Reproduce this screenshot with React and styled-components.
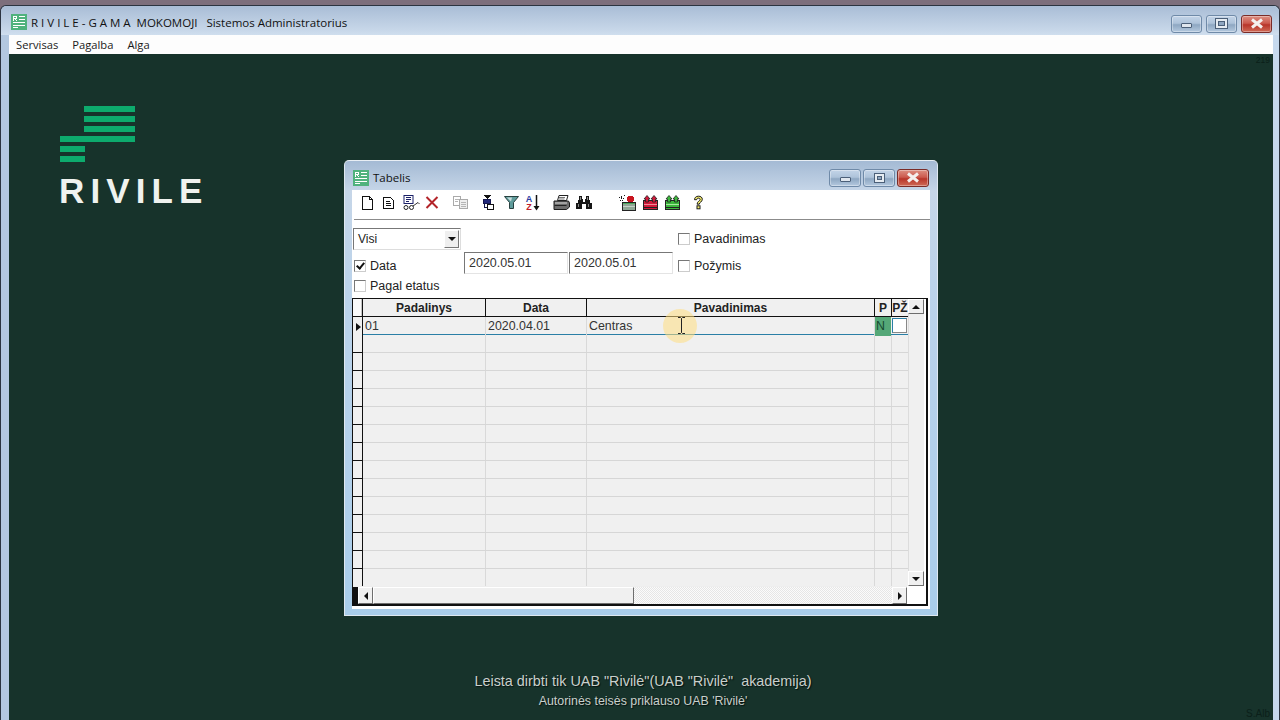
import React from 'react';
import styled, { createGlobalStyle } from 'styled-components';

const GlobalStyle = createGlobalStyle`
  html, body { margin: 0; padding: 0; background: #17332b; overflow: hidden; }
  #root { width: 1280px; height: 720px; }
`;

const rows = Array.from({ length: 14 });

// dx is the distance from the centre of the previous icon
const tools = [
  { Icon: NewDocIcon, dx: 13 },
  { Icon: DocIcon, dx: 21 },
  { Icon: ViewIcon, dx: 23 },
  { Icon: DeleteIcon, dx: 21 },
  { Icon: CopyIcon, dx: 28 },
  { Icon: TreeIcon, dx: 28 },
  { Icon: FunnelIcon, dx: 23 },
  { Icon: SortIcon, dx: 22 },
  { Icon: PrintIcon, dx: 28 },
  { Icon: BinocularsIcon, dx: 23 },
  { Icon: AddBoxIcon, dx: 43 },
  { Icon: RedBoxIcon, dx: 23 },
  { Icon: GreenBoxIcon, dx: 22 },
  { Icon: HelpIcon, dx: 26 },
];

export default function App() {
  return (
    <>
      <GlobalStyle />
      <Page>
        <MainWindow>
          <MainTitle>
            <AppIcon />
            <MainCaption>{'R I V I L E - G A M A  MOKOMOJI   Sistemos Administratorius'}</MainCaption>
            <CaptionButtons />
          </MainTitle>
          <MenuBar>
            <MenuItem>Servisas</MenuItem>
            <MenuItem>Pagalba</MenuItem>
            <MenuItem>Alga</MenuItem>
          </MenuBar>
          <Canvas>
            <Logo>
              <LogoBar $w={51} $left={24} />
              <LogoBar $w={51} $left={24} />
              <LogoBar $w={51} $left={24} />
              <LogoBar $w={75} />
              <LogoBar $w={25} />
              <LogoBar $w={25} />
              <LogoWord>RIVILE</LogoWord>
            </Logo>

            <Tabelis>
              <ChildTitle>
                <AppIcon />
                <ChildCaption>Tabelis</ChildCaption>
                <CaptionButtons $small />
              </ChildTitle>
              <Client>
                <Toolbar>
                  {tools.map(({ Icon, dx }, i) => (
                    <ToolSlot key={i} $dx={dx}>
                      <Icon />
                    </ToolSlot>
                  ))}
                </Toolbar>
                <Filters>
                  <Combo>
                    <ComboText>Visi</ComboText>
                    <ComboButton />
                  </Combo>
                  <span />
                  <CheckRow>
                    <CheckBox />
                    Pavadinimas
                  </CheckRow>
                  <CheckRow $nudge>
                    <CheckBox $checked />
                    Data
                  </CheckRow>
                  <Dates>
                    <DateInput>2020.05.01</DateInput>
                    <DateInput>2020.05.01</DateInput>
                  </Dates>
                  <CheckRow $nudge>
                    <CheckBox />
                    Požymis
                  </CheckRow>
                  <CheckRow>
                    <CheckBox />
                    Pagal etatus
                  </CheckRow>
                </Filters>

                <DataGrid>
                  <GridTop>
                    <Table>
                      <HeadRow>
                        <CornerCell />
                        <HeadCell>Padalinys</HeadCell>
                        <HeadCell>Data</HeadCell>
                        <HeadCell>Pavadinimas</HeadCell>
                        <HeadCell>P</HeadCell>
                        <HeadCell>PŽ</HeadCell>
                      </HeadRow>
                      <BodyRow $active>
                        <IndicatorCell><Marker /></IndicatorCell>
                        <Cell>01</Cell>
                        <Cell>2020.04.01</Cell>
                        <Cell>Centras</Cell>
                        <FlagCell>N</FlagCell>
                        <CheckCell><CellCheck /></CheckCell>
                      </BodyRow>
                      {rows.map((_, i) => (
                        <BodyRow key={i}>
                          <IndicatorCell />
                          <Cell />
                          <Cell />
                          <Cell />
                          <Cell />
                          <Cell />
                        </BodyRow>
                      ))}
                    </Table>
                    <VScroll>
                      <ScrollButton $h={15}><Arrow $dir="up" /></ScrollButton>
                      <VTrack />
                      <ScrollButton $h={15}><Arrow $dir="down" /></ScrollButton>
                    </VScroll>
                    <RightGap />
                  </GridTop>
                  <GridBottom>
                    <BlackStub />
                    <ScrollButton $w={15}><Arrow $dir="left" /></ScrollButton>
                    <HThumb />
                    <HTrack />
                    <ScrollButton $w={15}><Arrow $dir="right" /></ScrollButton>
                  </GridBottom>
                </DataGrid>
              </Client>
              <CursorGlow />
              <IBeam viewBox="0 0 9 17">
                <path d="M1 .5h2.500l1 1 1-1H8M4.500 1.500v14M1 16.500h2.500l1-1 1 1H8" fill="none" stroke="#222" />
              </IBeam>
            </Tabelis>

            <Footer>
              <FooterMain>{'Leista dirbti tik UAB "Rivilė"(UAB "Rivilė"  akademija)'}</FooterMain>
              <FooterSub>Autorinės teisės priklauso UAB 'Rivilė'</FooterSub>
            </Footer>
            <CornerMark $top>219</CornerMark>
            <CornerMark>S.Alb</CornerMark>
          </Canvas>
        </MainWindow>
      </Page>
    </>
  );
}

function CaptionButtons({ $small }) {
  return (
    <ButtonGroup $small={$small}>
      <CapButton $small={$small}><MinGlyph /></CapButton>
      <CapButton $small={$small}><MaxGlyph $small={$small} /></CapButton>
      <CapButton $small={$small} $close>
        <svg width="14" height="11" viewBox="0 0 14 11">
          <path d="M2 1.500l10 8M12 1.500l-10 8" stroke="#f4f0ee" strokeWidth="3" />
        </svg>
      </CapButton>
    </ButtonGroup>
  );
}

function AppIcon() {
  return (
    <svg width="16" height="16" viewBox="0 0 16 16" shapeRendering="crispEdges">
      <rect width="16" height="16" fill="#4fb27d" />
      <path d="M2 2h4v1H2zM2 3h1v4H2zM5 3h1v1H5zM3 4h3v1H3zM4 5h1v1H4zM5 6h1v1H5z" fill="#fff" />
      <path d="M8 2h6v1H8zM8 5h6v1H8zM2 8h12v1H2zM2 11h12v1H2zM2 13h5v1H2z" fill="#fff" />
    </svg>
  );
}

function NewDocIcon() {
  return (
    <svg width="13" height="14" viewBox="0 0 13 14" shapeRendering="crispEdges">
      <path d="M1.500.5h7l3 3v10h-10z" fill="#fff" stroke="#111" />
      <path d="M8.500.5v3h3" fill="none" stroke="#111" />
    </svg>
  );
}

function DocIcon() {
  return (
    <svg width="11" height="12" viewBox="0 0 11 12" shapeRendering="crispEdges">
      <path d="M.5.500h7l3 3v8h-10z" fill="#fff" stroke="#111" />
      <path d="M3 4h4v1H3zM3 6h5v1H3zM3 8h5v1H3z" fill="#111" />
    </svg>
  );
}

function ViewIcon() {
  return (
    <svg width="17" height="16" viewBox="0 0 17 16">
      <rect x="1" y="0.500" width="9" height="8" fill="#fff" stroke="#1a2068" />
      <path d="M3 2.500h5M3 4.500h5M3 6.500h3" stroke="#1a2068" />
      <circle cx="3" cy="12.500" r="2" fill="#fff" stroke="#222" />
      <circle cx="8.500" cy="12.500" r="2" fill="#fff" stroke="#222" />
      <path d="M10 11l5-3.500 1.500 1.500" fill="none" stroke="#333" />
    </svg>
  );
}

function DeleteIcon() {
  return (
    <svg width="14" height="13" viewBox="0 0 14 13">
      <path d="M1.500 1l11 11M12.500 1l-11 11" stroke="#b3242a" strokeWidth="2" />
    </svg>
  );
}

function CopyIcon() {
  return (
    <svg width="15" height="13" viewBox="0 0 15 13" shapeRendering="crispEdges">
      <rect x="0.500" y="0.500" width="7" height="9" fill="#fff" stroke="#aaa" />
      <rect x="6.500" y="3.500" width="8" height="9" fill="#eee" stroke="#aaa" />
      <path d="M8 6h5v1H8zM8 8h5v1H8zM8 10h5v1H8zM2 3h4v1H2zM2 5h3v1H2z" fill="#b5b5b5" />
    </svg>
  );
}

function TreeIcon() {
  return (
    <svg width="12" height="15" viewBox="0 0 12 15" shapeRendering="crispEdges">
      <path d="M1 0h9L5.500 4z" fill="#111" />
      <rect x="1" y="4.500" width="7" height="4" fill="#22287a" stroke="#14184e" />
      <rect x="5.500" y="9.500" width="6" height="5" fill="#fff" stroke="#111" />
      <path d="M2 9h1v3h2v1H2z" fill="#14184e" />
    </svg>
  );
}

function FunnelIcon() {
  return (
    <svg width="15" height="13" viewBox="0 0 15 13">
      <path d="M.5.500h14l-5 6v6h-4v-6z" fill="#5f9c9c" stroke="#27403f" />
      <path d="M3 1.500h5l-1 4z" fill="#c9dcdc" />
    </svg>
  );
}

function SortIcon() {
  return (
    <SortBox>
      <SortLetters>
        <SortLetter $color="#2a3aa0">A</SortLetter>
        <SortLetter $color="#c0202a">Z</SortLetter>
      </SortLetters>
      <svg width="7" height="16" viewBox="0 0 7 16">
        <path d="M3.500 0v13" stroke="#111" strokeWidth="1.500" />
        <path d="M.5 11h6l-3 4.500z" fill="#111" />
      </svg>
    </SortBox>
  );
}

function PrintIcon() {
  return (
    <svg width="17" height="15" viewBox="0 0 17 15">
      <path d="M6 .5h9l-1.500 5h-9z" fill="#fff" stroke="#222" />
      <path d="M6 2.500h6M5.500 4h6" stroke="#777" />
      <path d="M1 6h14.500l1 2v4l-3 2.500H1z" fill="#6d6d6d" stroke="#1c1c1c" />
      <path d="M2 8h12" stroke="#d8d8d8" />
      <path d="M1.500 10.500h12" stroke="#222" />
    </svg>
  );
}

function BinocularsIcon() {
  return (
    <svg width="16" height="13" viewBox="0 0 16 13" shapeRendering="crispEdges">
      <path d="M3 0h3v3h1v3h2V3h1V0h3v4h1v3h2v6H10V8H6v5H0V7h2V4h1z" fill="#161616" />
      <path d="M4 1h1v3H4zM11 1h1v3h-1zM2 8h1v3H2zM12 8h1v3h-1z" fill="#8a8a8a" />
    </svg>
  );
}

function AddBoxIcon() {
  return (
    <svg width="18" height="16" viewBox="0 0 18 16" shapeRendering="crispEdges">
      <rect x="4.500" y="7.500" width="13" height="8" fill="#8fa896" stroke="#222" />
      <path d="M5 8h12v1H5z" fill="#4caa5c" />
      <path d="M5 11h12v1H5z" fill="#c5d0c8" />
      <path d="M10 1h5v1h1v4h-1v1h-5V6H9V2h1z" fill="#c8141e" />
      <path d="M3 1h1v3H3zM1 2h1v1H1zM5 3h1v1H5zM2 5h1v1H2zM4 5h1v1H4zM6 0h1v1H6z" fill="#1a1a1a" />
    </svg>
  );
}

function RedBoxIcon() {
  return <ArrowBox $fill="#d3193a" $light="#f08a9a" />;
}

function GreenBoxIcon() {
  return <ArrowBox $fill="#3cb83c" $light="#a8e6a0" />;
}

function ArrowBox({ $fill, $light }) {
  return (
    <svg width="15" height="15" viewBox="0 0 15 15">
      <rect x="0.500" y="5.500" width="14" height="9" fill={$fill} stroke="#222" />
      <path d="M1 9.500h13" stroke={$light} />
      <path d="M1 12.500h13" stroke="#222" />
      <path d="M4 .5l3 3.500H5.500v3h-3V4H1zM11 .5l3 3.500h-1.500v3h-3V4H8z" fill={$fill} stroke="#222" strokeWidth="0.800" />
    </svg>
  );
}

function HelpIcon() {
  return (
    <svg width="11" height="15" viewBox="0 0 11 15">
      <path d="M5.500 1.200C3 1.200 1.500 2.700 1.500 4.700h2.200c0-1 .7-1.500 1.700-1.500s1.700.5 1.700 1.300c0 1.500-3 1.700-3 4.700h2.200c0-2 3-2.200 3-5 0-1.800-1.600-3-3.800-3z" fill="#f4ec6c" stroke="#1b1b1b" strokeWidth="1" />
      <rect x="4" y="10.800" width="3" height="3" fill="#f4ec6c" stroke="#1b1b1b" />
    </svg>
  );
}

const Page = styled.div`
  width: 1280px;
  height: 720px;
  display: flex;
  flex-direction: column;
  background: #7d6f7c;
  padding-top: 5px;
  box-sizing: border-box;
`;

const MainWindow = styled.div`
  flex: 1;
  display: flex;
  flex-direction: column;
  background: linear-gradient(90deg, #b3c8e0, #c3d5e9 50%, #c6d9ee);
  border-radius: 6px 6px 0 0;
  border: 1px solid #2c3440;
  border-bottom: 0;
  padding: 0 6px 0 8px;
  min-height: 0;
`;

const MainTitle = styled.div`
  height: 29px;
  display: flex;
  align-items: center;
  margin: 0 -6px 0 -8px;
  padding: 3px 7px 0 10px;
  box-sizing: border-box;
  background: linear-gradient(#a9bdd6, #c6d6e8 80%, #cfdeee);
  border-radius: 6px 6px 0 0;
`;

const MainCaption = styled.div`
  margin-left: 4px;
  flex: 1;
  font: 11.500px 'Open Sans', sans-serif;
  color: #111;
  white-space: pre;
`;

const ButtonGroup = styled.div`
  display: flex;
  gap: ${p => (p.$small ? 2 : 4)}px;
  margin-top: ${p => (p.$small ? 0 : 3)}px;
`;

const CapButton = styled.div`
  width: ${p => (p.$small ? 32 : 31)}px;
  height: 18px;
  display: flex;
  align-items: center;
  justify-content: center;
  box-sizing: border-box;
  border: 1px solid ${p => (p.$close ? '#7a2c28' : '#6f8aa8')};
  border-radius: 3px;
  box-shadow: inset 0 0 0 1px rgba(255, 255, 255, 0.35);
  background: ${p =>
    p.$close
      ? 'linear-gradient(#dc8f82, #cc5a4e 45%, #b8352a 55%, #cf6a56)'
      : 'linear-gradient(#c3d4e8, #aec3da 45%, #8ea7c2 55%, #b4c9df)'};
`;

const MinGlyph = styled.div`
  width: 11px;
  height: 5px;
  box-sizing: border-box;
  background: #dfe6ee;
  border: 1px solid #4b5f78;
  border-radius: 1px;
  margin-top: 3px;
`;

const MaxGlyph = styled.div`
  width: ${p => (p.$small ? 9 : 11)}px;
  height: ${p => (p.$small ? 8 : 9)}px;
  box-sizing: border-box;
  border: 2px solid #e6ecf2;
  background: #8fa6c0;
  box-shadow: 0 0 0 1px #4b5f78, inset 0 0 0 1px #4b5f78;
`;

const MenuBar = styled.div`
  height: 19px;
  flex: none;
  display: flex;
  align-items: center;
  gap: 14px;
  padding-left: 7px;
  background: #fdfdfd;
`;

const MenuItem = styled.div`
  font: 11.200px 'Open Sans', sans-serif;
  color: #1a1a1a;
`;

const Canvas = styled.div`
  flex: 1;
  position: relative;
  background: #17332b;
  padding: 52px 0 0 51px;
  min-height: 0;
`;

const Logo = styled.div`
  display: flex;
  flex-direction: column;
  gap: 4px;
`;

const LogoBar = styled.div`
  height: 6px;
  width: ${p => p.$w}px;
  margin-left: ${p => p.$left || 0}px;
  background: #0dab6d;
`;

const LogoWord = styled.div`
  margin: 5px 0 0 -1px;
  font: bold 35px/40px 'Liberation Sans', sans-serif;
  letter-spacing: 6.100px;
  color: #eff2ef;
`;

const Tabelis = styled.div`
  position: absolute;
  left: 335px;
  top: 106px;
  width: 594px;
  height: 456px;
  box-sizing: border-box;
  display: flex;
  flex-direction: column;
  padding: 0 8px 6px;
  border-radius: 5px 5px 0 0;
  border: 1px solid #dfe8f0;
  border-top-color: #e8eef4;
  background: linear-gradient(#a4bad4 0, #c6d6e8 30px, #bcd3ea 120px, #a9cdea);
`;

const ChildTitle = styled.div`
  height: 29px;
  flex: none;
  display: flex;
  align-items: center;
  padding-top: 4px;
  box-sizing: border-box;
`;

const ChildCaption = styled.div`
  margin-left: 4px;
  flex: 1;
  font: 11.500px 'Open Sans', sans-serif;
  color: #111;
`;

const Client = styled.div`
  flex: 1;
  background: #fff;
  display: flex;
  flex-direction: column;
  min-height: 0;
  margin: 0 -1px 0 -1px;
`;

const Toolbar = styled.div`
  height: 30px;
  flex: none;
  display: flex;
  align-items: center;
  margin-left: 2px;
  padding-bottom: 4px;
  border-bottom: 1px solid #8b8b8b;
  box-sizing: border-box;
`;

const ToolSlot = styled.div`
  width: 0;
  display: flex;
  align-items: center;
  justify-content: center;
  margin-left: ${p => p.$dx}px;
  > * { flex: none; }
`;

const SortBox = styled.div`
  display: flex;
  align-items: center;
  gap: 1px;
`;

const SortLetters = styled.div`
  display: flex;
  flex-direction: column;
  align-items: center;
`;

const SortLetter = styled.span`
  font: bold 9px/8px 'Liberation Sans', sans-serif;
  color: ${p => p.$color};
`;

const Filters = styled.div`
  display: grid;
  grid-template-columns: 111px 213px 1fr;
  grid-template-rows: 24px 24px 21px;
  padding: 7px 0 0 1px;
  align-items: center;
  height: 78px;
  box-sizing: border-box;
  flex: none;
`;

const Combo = styled.div`
  width: 108px;
  height: 22px;
  box-sizing: border-box;
  display: flex;
  align-items: center;
  justify-content: space-between;
  border: 1px solid #777;
  border-right-color: #ddd;
  border-bottom-color: #ddd;
  padding: 0 1px 0 4px;
`;

const ComboText = styled.span`
  font: 12px 'Liberation Sans', sans-serif;
  color: #222;
`;

const ComboButton = styled.div`
  width: 15px;
  height: 18px;
  position: relative;
  background: #efefef;
  border: 1px solid;
  border-color: #fff #777 #777 #fff;
  box-sizing: border-box;
  &::after {
    content: '';
    position: absolute;
    left: 3px;
    top: 6px;
    border: 4px solid transparent;
    border-top: 4px solid #111;
    border-bottom: 0;
  }
`;

const CheckRow = styled.div`
  display: flex;
  align-items: center;
  gap: 4px;
  font: 12.500px 'Liberation Sans', sans-serif;
  color: #222;
  padding-top: ${p => (p.$nudge ? 6 : 0)}px;
`;

const CheckBox = styled.div`
  width: 12px;
  height: 12px;
  margin-left: 1px;
  box-sizing: border-box;
  flex: none;
  position: relative;
  background: #fff;
  border: 1px solid;
  border-color: #777 #ccc #ccc #777;
  ${p =>
    p.$checked &&
    `&::after {
      content: '';
      position: absolute;
      left: 3px;
      top: 0;
      width: 3px;
      height: 6px;
      border: solid #111;
      border-width: 0 2px 2px 0;
      transform: rotate(40deg);
    }`}
`;

const Dates = styled.div`
  display: flex;
  gap: 1px;
`;

const DateInput = styled.div`
  width: 104px;
  height: 22px;
  box-sizing: border-box;
  border: 1px solid;
  border-color: #777 #e4e4e4 #e4e4e4 #777;
  padding: 3px 0 0 4px;
  font: 12.500px 'Liberation Sans', sans-serif;
  color: #333;
`;

const DataGrid = styled.div`
  width: 576px;
  height: 308px;
  box-sizing: border-box;
  border: 1px solid #111;
  border-width: 1px 2px 2px 1px;
  display: flex;
  flex-direction: column;
  flex: none;
`;

const GridTop = styled.div`
  flex: 1;
  display: flex;
  min-height: 0;
`;

const Table = styled.div`
  width: 555px;
  overflow: hidden;
  background: #f0f0f0;
`;

const columns = '9px 123px 101px 288px 17px 17px';

const HeadRow = styled.div`
  display: grid;
  grid-template-columns: ${columns};
  height: 18px;
  box-sizing: border-box;
  border-bottom: 1px solid #111;
`;

const HeadCell = styled.div`
  font: bold 12px/19px 'Liberation Sans', sans-serif;
  color: #222;
  text-align: center;
  border-left: 1px solid #111;
  white-space: nowrap;
  overflow: hidden;
`;

const CornerCell = styled.div`
  background: #fafafa;
  border-right: 2px solid #c4c4c4;
  margin-right: -1px;
`;

const BodyRow = styled.div`
  display: grid;
  grid-template-columns: ${columns};
  height: 18px;
  box-sizing: border-box;
  border-bottom: 1px solid ${p => (p.$active ? '#2a7fa6' : '#d6d6d6')};
`;

const IndicatorCell = styled.div`
  position: relative;
  z-index: 1;
  border-right: 1px solid #111;
  margin: 0 -1px -1px 0;
  border-bottom: 1px solid #111;
  display: flex;
  align-items: center;
  justify-content: flex-end;
  background: #f0f0f0;
`;

const Marker = styled.div`
  border: 4px solid transparent;
  border-left: 5px solid #111;
  border-right: 0;
  margin-right: 1px;
  margin-top: 1px;
`;

const Cell = styled.div`
  font: 12.400px/19px 'Liberation Sans', sans-serif;
  color: #333;
  padding-left: 2px;
  border-left: 1px solid #d9d9d9;
  white-space: nowrap;
`;

const FlagCell = styled(Cell)`
  background: #55a878;
  background-clip: padding-box;
  color: #174a30;
  padding-left: 1px;
`;

const CheckCell = styled(Cell)`
  padding: 1px;
  border: 0;
`;

const CellCheck = styled.div`
  width: 15px;
  height: 15px;
  box-sizing: border-box;
  background: #fff;
  border: 1px solid;
  border-color: #2a7fa6 #888 #888 #2a7fa6;
`;

const VScroll = styled.div`
  width: 16px;
  flex: none;
  display: flex;
  flex-direction: column;
  background: #f0f0f0;
`;

const VTrack = styled.div`
  flex: 1;
  background: #f0f0f0;
  border-left: 1px solid #dcdcdc;
`;

const RightGap = styled.div`
  flex: 1;
  background: #fff;
`;

const ScrollButton = styled.div`
  flex: none;
  width: ${p => (p.$w ? `${p.$w}px` : 'auto')};
  height: ${p => (p.$h ? `${p.$h}px` : 'auto')};
  box-sizing: border-box;
  display: flex;
  align-items: center;
  justify-content: center;
  background: #f0f0f0;
  border: 1px solid;
  border-color: #fff #6e6e6e #6e6e6e #fff;
`;

const Arrow = styled.div`
  width: 0;
  height: 0;
  border: 4px solid transparent;
  ${p => p.$dir === 'up' && 'border-bottom: 4px solid #111; border-top: 0;'}
  ${p => p.$dir === 'down' && 'border-top: 4px solid #111; border-bottom: 0;'}
  ${p => p.$dir === 'left' && 'border-right: 4px solid #111; border-left: 0;'}
  ${p => p.$dir === 'right' && 'border-left: 4px solid #111; border-right: 0;'}
`;

const GridBottom = styled.div`
  height: 17px;
  flex: none;
  display: flex;
  margin-right: 19px;
  border-top: 1px solid #eee;
  box-sizing: content-box;
  background: #fff;
  > * { height: 17px; }
`;

const BlackStub = styled.div`
  width: 5px;
  flex: none;
  background: #111;
`;

const HThumb = styled.div`
  width: 261px;
  flex: none;
  box-sizing: border-box;
  background: #f0f0f0;
  border: 1px solid;
  border-color: #fff #6e6e6e #6e6e6e #fff;
`;

const HTrack = styled.div`
  flex: 1;
  background: repeating-conic-gradient(#e6e6e6 0 25%, #fbfbfb 0 50%) 0 0 / 2px 2px;
`;

const CursorGlow = styled.div`
  position: absolute;
  left: 318px;
  top: 148px;
  width: 34px;
  height: 34px;
  border-radius: 50%;
  background: rgba(255, 222, 130, 0.55);
  pointer-events: none;
`;

const IBeam = styled.svg`
  position: absolute;
  left: 332px;
  top: 156px;
  width: 9px;
  height: 17px;
`;

const Footer = styled.div`
  position: absolute;
  left: 0;
  right: 0;
  bottom: 9px;
  padding-left: 4px;
  text-align: center;
  color: #c9d0cc;
  font-family: 'Liberation Sans', sans-serif;
  text-shadow: 1px 1px 1px #06120e;
  white-space: pre;
`;

const FooterMain = styled.div`
  font-size: 14.400px;
  line-height: 20px;
`;

const FooterSub = styled.div`
  font-size: 12.400px;
  line-height: 20px;
`;

const CornerMark = styled.div`
  position: absolute;
  right: 3px;
  ${p => (p.$top ? 'top: 0;' : 'bottom: 0;')}
  font: ${p => (p.$top ? 8.5 : 10)}px/12px 'Liberation Sans', sans-serif;
  color: #0b1f19;
`;
